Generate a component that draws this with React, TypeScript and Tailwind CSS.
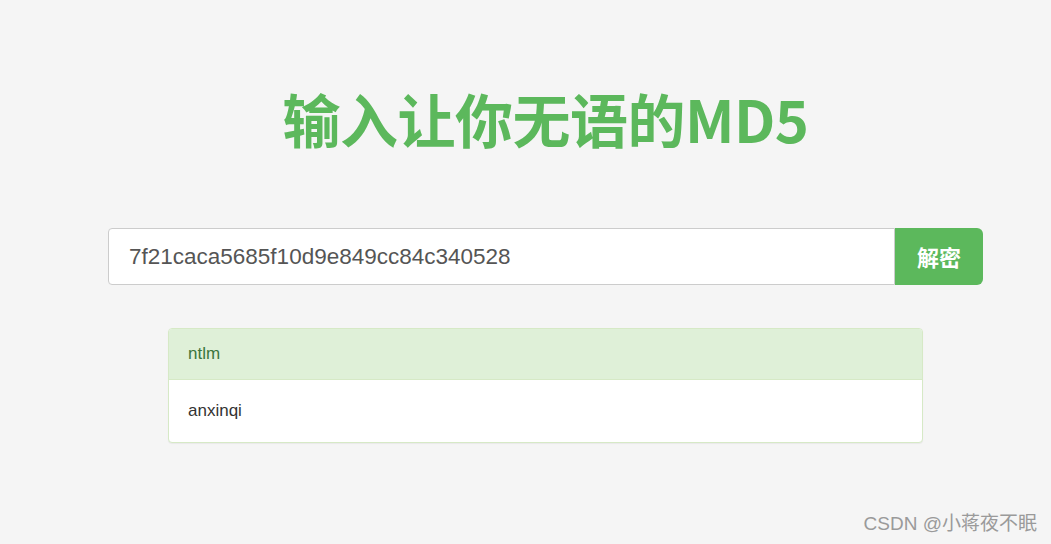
export default function App() {
  return (
    <div className="relative h-[544px] w-[1051px] overflow-hidden bg-[#f5f5f5] font-['Liberation_Sans','Noto_Sans_CJK_SC',sans-serif]">
      <div className="ml-[108px] w-[875px] pt-[73px]">
        <h1 className="text-center text-[58px] font-bold leading-[90px] tracking-[-0.5px] text-[#5cb85c] font-['Noto_Sans_CJK_SC',sans-serif]">
          输入让你无语的MD5
        </h1>
        <div className="mt-[65px] flex h-[57px]">
          <input
            className="h-full flex-1 rounded-l-[4px] border border-[#ccc] bg-white px-[20px] text-[22.5px] text-[#555] outline-none"
            defaultValue="7f21caca5685f10d9e849cc84c340528"
          />
          <button className="h-full w-[88px] rounded-r-[6px] bg-[#5cb85c] text-[22px] font-bold text-white font-['Noto_Sans_CJK_SC',sans-serif]">
            解密
          </button>
        </div>
        <div className="mx-[60px] mt-[43px] overflow-hidden rounded-[4px] border border-[#d6e9c6] bg-white shadow-[0_1px_1px_rgba(0,0,0,0.05)]">
          <div className="flex h-[51px] items-center border-b border-[#d6e9c6] bg-[#dff0d8] px-[19px] text-[17px] text-[#3c763d]">
            ntlm
          </div>
          <div className="flex h-[62px] items-center px-[19px] text-[17px] text-[#333]">anxinqi</div>
        </div>
      </div>
      <div className="absolute bottom-[6px] right-[14px] text-[19px] text-[#9a9a9a] font-['Liberation_Sans','Noto_Sans_CJK_SC',sans-serif]">
        CSDN @小蒋夜不眠
      </div>
    </div>
  );
}
